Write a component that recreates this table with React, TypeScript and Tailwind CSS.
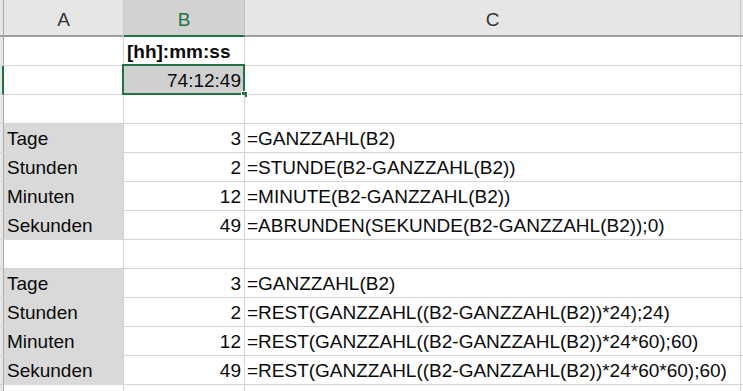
import React from "react";

type Row = {
  a?: string;
  b?: string;
  c?: string;
  shaded?: boolean;
  bold?: boolean;
  selected?: boolean;
  bAlign?: "left" | "right";
};

const rows: Row[] = [
  { b: "[hh]:mm:ss", bold: true, bAlign: "left" },
  { b: "74:12:49", selected: true },
  {},
  { a: "Tage", b: "3", c: "=GANZZAHL(B2)", shaded: true },
  { a: "Stunden", b: "2", c: "=STUNDE(B2-GANZZAHL(B2))", shaded: true },
  { a: "Minuten", b: "12", c: "=MINUTE(B2-GANZZAHL(B2))", shaded: true },
  { a: "Sekunden", b: "49", c: "=ABRUNDEN(SEKUNDE(B2-GANZZAHL(B2));0)", shaded: true },
  {},
  { a: "Tage", b: "3", c: "=GANZZAHL(B2)", shaded: true },
  { a: "Stunden", b: "2", c: "=REST(GANZZAHL((B2-GANZZAHL(B2))*24);24)", shaded: true },
  { a: "Minuten", b: "12", c: "=REST(GANZZAHL((B2-GANZZAHL(B2))*24*60);60)", shaded: true },
  { a: "Sekunden", b: "49", c: "=REST(GANZZAHL((B2-GANZZAHL(B2))*24*60*60);60)", shaded: true },
  {},
  {},
];

const cell = "h-[29px] border-b border-r border-[#d4d4d4] flex items-end pb-[2px] leading-[22px] whitespace-nowrap";

function HeaderRow() {
  return (
    <>
      <div className="h-[37px] bg-[#e6e6e6] border-r border-r-[#ababab] border-b-2 border-b-[#9f9f9f]" />
      <div className="h-[37px] bg-[#e6e6e6] border-r border-r-[#c8c8c8] border-b-2 border-b-[#9f9f9f] flex items-end justify-center pb-[4px] text-[19px] leading-[22px] text-[#333]">
        A
      </div>
      <div className="h-[37px] bg-[#d2d2d2] border-r border-r-[#c0c0c0] border-b-2 border-b-[#217346] flex items-end justify-center pb-[4px] text-[19px] leading-[22px] text-[#217346]">
        B
      </div>
      <div className="h-[37px] bg-[#e6e6e6] border-r border-r-[#c8c8c8] border-b-2 border-b-[#9f9f9f] flex items-end justify-center pb-[4px] text-[19px] leading-[22px] text-[#333]">
        C
      </div>
      <div className="h-[37px] bg-[#e6e6e6] border-b-2 border-b-[#9f9f9f]" />
    </>
  );
}

function SheetRow({ row }: { row: Row }) {
  return (
    <>
      <div
        className={
          "h-[29px] bg-[#e6e6e6] border-b border-b-[#d4d4d4] " +
          (row.selected ? "border-r-2 border-r-[#217346]" : "border-r border-r-[#ababab]")
        }
      />
      <div
        className={
          cell +
          " pl-[3px] " +
          (row.shaded ? "bg-[#d9d9d9] border-[#d9d9d9] border-r-[#d4d4d4]" : "bg-white")
        }
      >
        {row.a}
      </div>
      <div
        className={
          cell +
          " relative " +
          (row.bAlign === "left" ? "justify-start pl-[3px] " : "justify-end pr-[3px] ") +
          (row.bold ? "font-bold " : "") +
          (row.selected ? "bg-[#d0d0d0]" : "bg-white")
        }
      >
        {row.b}
        {row.selected && (
          <>
            <div className="absolute -left-[2px] -top-[2px] -right-[1px] -bottom-[1px] border-2 border-[#217346] pointer-events-none" />
            <div className="absolute -right-[4px] -bottom-[4px] w-[7px] h-[7px] bg-[#217346] border border-white" />
          </>
        )}
      </div>
      <div className={cell + " pl-[2px] bg-white"}>{row.c}</div>
      <div className="h-[29px] border-b border-[#d4d4d4] bg-white" />
    </>
  );
}

export default function App() {
  return (
    <div className="w-[743px] h-[391px] overflow-hidden bg-white font-['Liberation_Sans',Arial,sans-serif] text-[19px] text-[#0a0a0a]">
      <div className="grid grid-cols-[4px_120px_121px_496px_2px]">
        <HeaderRow />
        {rows.map((row, i) => (
          <SheetRow key={i} row={row} />
        ))}
      </div>
    </div>
  );
}
